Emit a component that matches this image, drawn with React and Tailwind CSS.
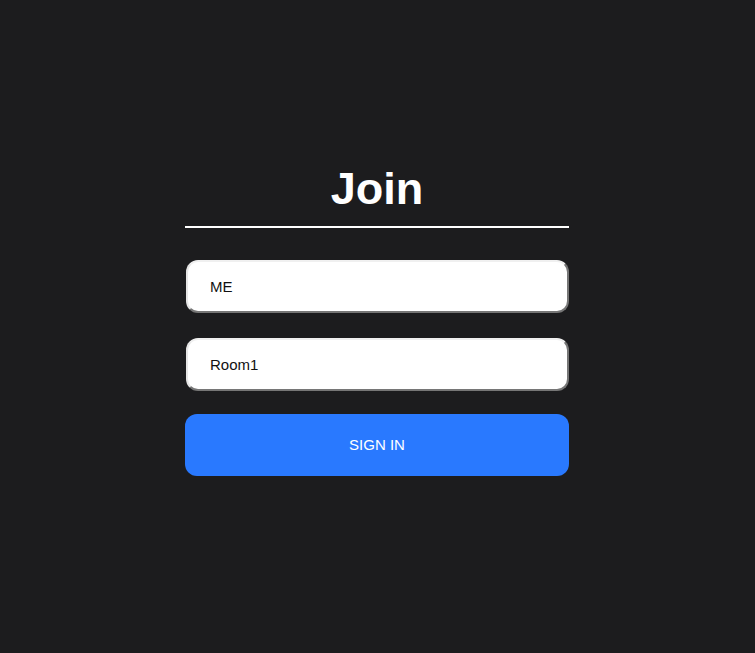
import React, { useState } from "react";

export default function App() {
  const [name, setName] = useState("ME");
  const [room, setRoom] = useState("Room1");

  return (
    <div className="min-h-screen bg-[#1c1c1e] flex justify-center pt-[161px] pr-[1px] font-['Liberation_Sans',Arial,sans-serif]">
      <div className="w-[384px] flex flex-col">
        <h1 className="text-center text-white text-[45px] font-bold leading-[55px]">Join</h1>
        <div className="h-[2px] bg-white mt-[10px]" />
        <input
          type="text"
          value={name}
          onChange={(e) => setName(e.target.value)}
          className="mt-[32px] ml-[1px] h-[53px] w-[383px] bg-white rounded-[12px] border-2 border-t-[#f0f0f0] border-l-[#e6e6e6] border-r-[#767676] border-b-[#767676] pl-[22px] text-[15px] text-[#111] outline-none"
        />
        <input
          type="text"
          value={room}
          onChange={(e) => setRoom(e.target.value)}
          className="mt-[25px] ml-[1px] h-[53px] w-[383px] bg-white rounded-[12px] border-2 border-t-[#f0f0f0] border-l-[#e6e6e6] border-r-[#767676] border-b-[#767676] pl-[22px] text-[15px] text-[#111] outline-none"
        />
        <button className="mt-[23px] h-[62px] w-full bg-[#2979ff] rounded-[12px] text-white text-[15px]">
          SIGN IN
        </button>
      </div>
    </div>
  );
}
